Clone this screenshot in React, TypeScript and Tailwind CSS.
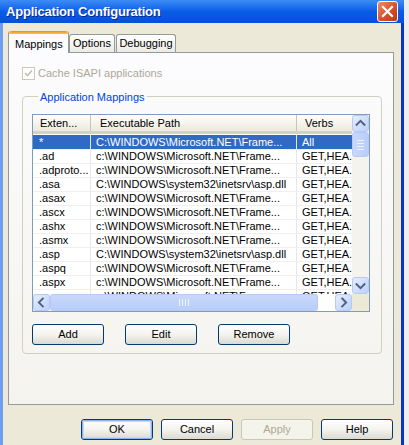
import React from "react";

const ROWS: Array<[string, string, string]> = [
  ["*", "C:\\WINDOWS\\Microsoft.NET\\Frame...", "All"],
  [".ad", "c:\\WINDOWS\\Microsoft.NET\\Frame...", "GET,HEA..."],
  [".adproto...", "c:\\WINDOWS\\Microsoft.NET\\Frame...", "GET,HEA..."],
  [".asa", "C:\\WINDOWS\\system32\\inetsrv\\asp.dll", "GET,HEA..."],
  [".asax", "c:\\WINDOWS\\Microsoft.NET\\Frame...", "GET,HEA..."],
  [".ascx", "c:\\WINDOWS\\Microsoft.NET\\Frame...", "GET,HEA..."],
  [".ashx", "c:\\WINDOWS\\Microsoft.NET\\Frame...", "GET,HEA..."],
  [".asmx", "c:\\WINDOWS\\Microsoft.NET\\Frame...", "GET,HEA..."],
  [".asp", "C:\\WINDOWS\\system32\\inetsrv\\asp.dll", "GET,HEA..."],
  [".aspq", "c:\\WINDOWS\\Microsoft.NET\\Frame...", "GET,HEA..."],
  [".aspx", "c:\\WINDOWS\\Microsoft.NET\\Frame...", "GET,HEA..."],
  [".cs", "c:\\WINDOWS\\Microsoft.NET\\Frame...", "GET,HEA..."],
];

function Arrow({ dir }: { dir: "up" | "down" | "left" | "right" }) {
  const d = {
    up: "M4 10 L8.5 5.5 L13 10",
    down: "M4 7 L8.5 11.5 L13 7",
    left: "M10 4 L5.5 8.5 L10 13",
    right: "M7 4 L11.5 8.5 L7 13",
  }[dir];
  return (
    <svg width="17" height="17" viewBox="0 0 17 17">
      <path d={d} fill="none" stroke="#4D6185" strokeWidth="2.2" strokeLinecap="square" />
    </svg>
  );
}

function ScrollButton({ dir }: { dir: "up" | "down" | "left" | "right" }) {
  return (
    <div className="flex h-[17px] w-[17px] shrink-0 items-center justify-center rounded-[3px] border border-[#B7CAF5] bg-gradient-to-br from-[#E6EEFC] to-[#BDD0F8]">
      <Arrow dir={dir} />
    </div>
  );
}

function XpButton({
  label,
  isDefault,
  disabled,
}: {
  label: string;
  isDefault?: boolean;
  disabled?: boolean;
}) {
  if (disabled) {
    return (
      <div className="flex h-[21px] w-[72px] items-center justify-center rounded-[3px] border border-[#C9C7BA] bg-[#F5F4EA] text-[#ACA899]">
        {label}
      </div>
    );
  }
  return (
    <div className="flex h-[21px] w-[72px] items-center justify-center rounded-[3px] border border-[#003C74] bg-gradient-to-b from-[#FFFFFF] via-[#F4F3EE] to-[#DCDAD0]">
      <div
        className={
          isDefault
            ? "flex h-full w-full items-center justify-center rounded-[2px] border border-[#8CB4F2] shadow-[inset_0_0_0_1px_#C4D8F7]"
            : "flex h-full w-full items-center justify-center"
        }
      >
        {label}
      </div>
    </div>
  );
}

function ListView() {
  return (
    <div className="flex h-[198px] w-[338px] flex-col border border-[#7F9DB9] bg-white">
      <div className="flex h-[179px]">
        <div className="flex w-[319px] flex-col overflow-hidden">
          {/* header */}
          <div className="flex h-[19px] shrink-0 border-b-[3px] border-[#D6D2C2] bg-gradient-to-b from-[#FFFFFF] to-[#EBEADB] text-black">
            <div className="flex w-[58px] shrink-0 items-center border-r border-[#C7C5B2] pl-[7px]">Exten...</div>
            <div className="flex w-[206px] shrink-0 items-center border-r border-[#C7C5B2] pl-[9px]">Executable Path</div>
            <div className="flex w-[80px] shrink-0 items-center pl-[8px]">Verbs</div>
          </div>
          {/* rows */}
          <div className="flex flex-col overflow-hidden pt-px">
            {ROWS.map(([ext, path, verbs], i) => (
              <div
                key={ext}
                className={
                  i === 0
                    ? "flex h-[14px] shrink-0 bg-[#316AC5] leading-[14px] text-white"
                    : "flex h-[14px] shrink-0 border-t border-[#EFEFEF] leading-[13px] text-black"
                }
              >
                <div className="w-[58px] shrink-0 overflow-hidden whitespace-nowrap border-r border-[#E6E6E6] pl-[6px]">{ext}</div>
                <div className="w-[206px] shrink-0 overflow-hidden whitespace-nowrap border-r border-[#E6E6E6] pl-[5px]">{path}</div>
                <div className="w-[80px] shrink-0 overflow-hidden whitespace-nowrap pl-[5px]">{verbs}</div>
              </div>
            ))}
          </div>
        </div>
        {/* vertical scrollbar */}
        <div className="flex w-[17px] flex-col bg-[#F4F3EE]">
          <ScrollButton dir="up" />
          <div className="flex h-[25px] w-[17px] flex-col items-center justify-center gap-[2px] rounded-[3px] border border-[#B7CAF5] bg-gradient-to-r from-[#C9D8FC] to-[#B8CDF8]">
            <div className="h-px w-[7px] bg-[#EEF4FE]" />
            <div className="h-px w-[7px] bg-[#EEF4FE]" />
            <div className="h-px w-[7px] bg-[#EEF4FE]" />
            <div className="h-px w-[7px] bg-[#EEF4FE]" />
          </div>
          <div className="flex-1" />
          <ScrollButton dir="down" />
        </div>
      </div>
      {/* horizontal scrollbar */}
      <div className="flex h-[17px]">
        <div className="flex w-[319px] bg-[#F4F3EE]">
          <ScrollButton dir="left" />
          <div className="flex h-[17px] w-[268px] items-center justify-center gap-[2px] rounded-[3px] border border-[#B7CAF5] bg-gradient-to-b from-[#C9D8FC] to-[#B8CDF8]">
            <div className="h-[7px] w-px bg-[#EEF4FE]" />
            <div className="h-[7px] w-px bg-[#EEF4FE]" />
            <div className="h-[7px] w-px bg-[#EEF4FE]" />
            <div className="h-[7px] w-px bg-[#EEF4FE]" />
          </div>
          <div className="flex-1 bg-[#FEFEFB]" />
          <ScrollButton dir="right" />
        </div>
        <div className="w-[17px] bg-[#ECE9D8]" />
      </div>
    </div>
  );
}

export default function App() {
  return (
    <div
      className="flex h-[445px] w-[409px] overflow-hidden bg-[#EDEDED] text-[11px] text-black"
      style={{ fontFamily: '"Liberation Sans", Arial, sans-serif' }}
    >
      <div className="flex w-[404px] flex-col">
        {/* title bar */}
        <div className="flex h-[23px] shrink-0 items-center justify-between bg-gradient-to-b from-[#3C8CF6] via-[#0A5CE8] to-[#0451DA] pl-[6px] pr-[6px]">
          <span className="text-[13px] font-bold tracking-[-0.2px] text-white [text-shadow:1px_1px_0_#0A2A8A]">
            Application Configuration
          </span>
          <div className="flex h-[21px] w-[21px] items-center justify-center rounded-[3px] border border-white bg-gradient-to-br from-[#EC8C6C] via-[#D9562C] to-[#B93610]">
            <svg width="13" height="13" viewBox="0 0 13 13">
              <path d="M2 2 L11 11 M11 2 L2 11" stroke="white" strokeWidth="2.2" strokeLinecap="square" />
            </svg>
          </div>
        </div>

        {/* body */}
        <div className="flex flex-1 flex-col border-l-[3px] border-r-[3px] border-l-[#6E9EF2] border-r-[#0A32C8] bg-[#ECE9D8] pl-[5px] pt-[8px]">
          {/* tabs */}
          <div className="relative z-10 flex h-[21px] items-end">
            <div className="-mb-px flex h-[22px] w-[61px] flex-col rounded-t-[3px] border-x border-[#919B9C] bg-[#FCFCFE]">
              <div className="h-[3px] rounded-t-[3px] bg-gradient-to-b from-[#E68B2C] to-[#FFC73C]" />
              <div className="pl-[6px] pt-[2px]">Mappings</div>
            </div>
            <div className="flex h-[18px] w-[46px] items-center justify-center rounded-t-[3px] border-x border-t border-[#919B9C] bg-gradient-to-b from-[#FFFFFF] to-[#ECEBE6]">
              Options
            </div>
            <div className="ml-px flex h-[18px] w-[60px] items-center justify-center rounded-t-[3px] border-x border-t border-[#919B9C] bg-gradient-to-b from-[#FFFFFF] to-[#ECEBE6]">
              Debugging
            </div>
          </div>

          {/* tab panel */}
          <div className="flex h-[353px] w-[386px] flex-col border border-[#919B9C] bg-gradient-to-b from-[#FCFCFE] to-[#F4F3EE] pl-[13px] pt-[12px]">
            <div className="flex items-center gap-[3px] text-[#ACA899]">
              <div className="flex h-[13px] w-[13px] items-center justify-center border border-[#CAC8BB] bg-white">
                <svg width="9" height="9" viewBox="0 0 9 9">
                  <path d="M1 4 L3.5 6.5 L8 1.5" fill="none" stroke="#C2C0B4" strokeWidth="1.6" />
                </svg>
              </div>
              <span>Cache ISAPI applications</span>
            </div>

            <fieldset className="mt-[7px] h-[265px] w-[360px] rounded-[4px] border border-[#D0D0BF] px-[9px] pt-[9px]">
              <legend className="ml-[6px] px-[2px] text-[#0046D5]">Application Mappings</legend>
              <ListView />
              <div className="mt-[12px] flex gap-[21px]">
                <XpButton label="Add" />
                <XpButton label="Edit" />
                <XpButton label="Remove" />
              </div>
            </fieldset>
          </div>

          {/* dialog buttons */}
          <div className="mt-[14px] flex justify-end gap-[8px] pr-[8px]">
            <XpButton label="OK" isDefault />
            <XpButton label="Cancel" />
            <XpButton label="Apply" disabled />
            <XpButton label="Help" />
          </div>
        </div>
      </div>
    </div>
  );
}
